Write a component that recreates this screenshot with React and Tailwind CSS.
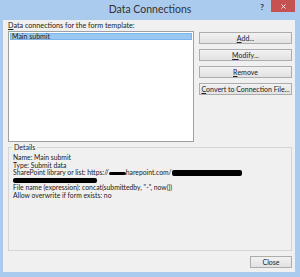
import { X } from "lucide-react";

const font = { fontFamily: 'Lato, "Noto Sans", sans-serif' };

function Btn({ children, className = "" }) {
  return (
    <div
      className={`flex h-[12px] items-center justify-center whitespace-nowrap border border-[#adadad] bg-gradient-to-b from-[#f2f2f2] to-[#e2e2e2] text-[7px] leading-none text-[#222] ${className}`}
    >
      {children}
    </div>
  );
}

function Blot({ className = "" }) {
  return <span className={`inline-block rounded-[2px] bg-black align-middle ${className}`} />;
}

export default function App() {
  return (
    <div className="flex h-[277px] w-[300px] flex-col bg-[#aacbee]" style={font}>
      <div className="relative flex h-[20px] shrink-0 items-center justify-center">
        <span className="text-[10.5px] text-[#333]">Data Connections</span>
        <span className="absolute right-[36px] top-[1px] text-[8px] font-bold text-[#333]">?</span>
        <div className="absolute right-[5px] top-0 flex h-[12px] w-[24px] items-center justify-center bg-[#c75050]">
          <X size={7} strokeWidth={3} color="#fff" />
        </div>
      </div>
      <div className="mb-[5px] ml-[3px] mr-[5px] flex flex-1 flex-col bg-[#f0f0f0] px-[5px] pr-[3px] text-[#222]">
        <div className="h-[11px] whitespace-nowrap pt-[1px] text-[7.2px] leading-[10px]">
          <span className="underline">D</span>ata connections for the form template:
        </div>
        <div className="flex gap-[5px]">
          <div className="h-[111px] w-[186px] border border-[#a0a0a0] bg-white p-[1px]">
            <div className="h-[7px] border border-[#7fb5ea] bg-[#99c8f3] pl-[1px] text-[7px] leading-[5px]">
              Main submit
            </div>
          </div>
          <div className="flex flex-1 flex-col gap-[5px] pt-[1px]">
            <Btn>
              <span className="underline">A</span>dd...
            </Btn>
            <Btn>
              <span className="underline">M</span>odify...
            </Btn>
            <Btn>
              <span className="underline">R</span>emove
            </Btn>
            <Btn>
              <span className="underline">C</span>onvert to Connection File...
            </Btn>
          </div>
        </div>
        <div className="relative mt-[5px] h-[104px] border border-[#d5d5d5] px-[4px] pt-[6px] text-[6.8px] leading-[7.5px]">
          <span className="absolute left-[3px] top-[-5px] bg-[#f0f0f0] px-[2px] text-[7px] leading-[8px]">Details</span>
          <div className="whitespace-nowrap">Name: Main submit</div>
          <div className="whitespace-nowrap">Type: Submit data</div>
          <div className="whitespace-nowrap">
            SharePoint library or list: https://
            <Blot className="h-[3px] w-[17px]" />
            harepoint.com/
            <Blot className="h-[6px] w-[70px]" />
          </div>
          <div className="flex h-[7.5px] items-center">
            <Blot className="h-[5px] w-[84px]" />
          </div>
          <div className="whitespace-nowrap">File name (expression): concat(submittedby, &quot;-&quot;, now())</div>
          <div className="whitespace-nowrap">Allow overwrite if form exists: no</div>
        </div>
        <div className="mt-[5px] flex justify-end">
          <Btn className="w-[42px]">Close</Btn>
        </div>
      </div>
    </div>
  );
}
